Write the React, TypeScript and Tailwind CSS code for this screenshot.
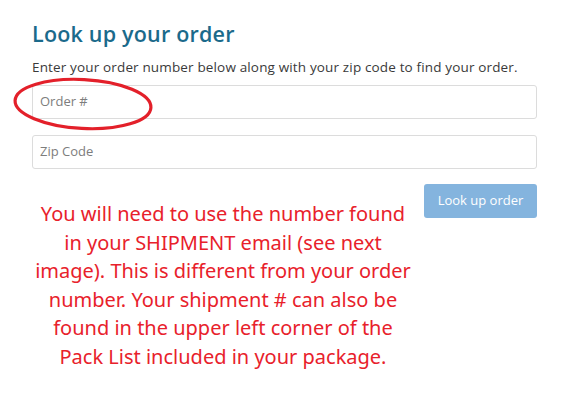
import React from 'react';

export default function App() {
  return (
    <div className="relative min-h-[408px] w-[576px] bg-white font-['Open_Sans',sans-serif]">
      <main className="pl-[32px] pr-[39px] pt-[20px]">
        <h1 className="text-[21.5px] leading-[28px] font-semibold tracking-[0.2px] text-[#1b6a8b]">
          Look up your order
        </h1>
        <p className="mt-[11px] text-[13.5px] leading-[17px] tracking-[0.15px] text-[#3a3a3a]">
          Enter your order number below along with your zip code to find your order.
        </p>
        <div className="mt-[9px] space-y-[16px]">
          <div className="flex h-[34px] items-center rounded-[3px] border border-[#dcdcdc] px-[7px] text-[13px] text-[#7d7d7d]">
            Order #
          </div>
          <div className="flex h-[34px] items-center rounded-[3px] border border-[#dcdcdc] px-[7px] text-[13px] text-[#7d7d7d]">
            Zip Code
          </div>
        </div>
        <div className="mt-[15px] flex items-start">
          <p className="mt-[16px] w-[380px] pl-[2px] text-center font-['Noto_Sans',sans-serif] text-[20px] leading-[28.5px] text-[#e8212b]">
            You will need to use the number found in your SHIPMENT email (see next image). This is different from your order number. Your shipment # can also be found in the upper left corner of the Pack List included in your package.
          </p>
          <button className="ml-auto h-[34px] w-[113px] rounded-[3px] bg-[#84b4de] text-[13px] font-medium text-white">
            Look up order
          </button>
        </div>
      </main>
      <svg className="absolute left-[12px] top-[76px]" width="142" height="56" viewBox="0 0 142 56">
        <ellipse cx="71" cy="28" rx="68" ry="24.5" fill="none" stroke="#e3202a" strokeWidth="3.2" transform="rotate(3 71 28)" />
      </svg>
    </div>
  );
}
